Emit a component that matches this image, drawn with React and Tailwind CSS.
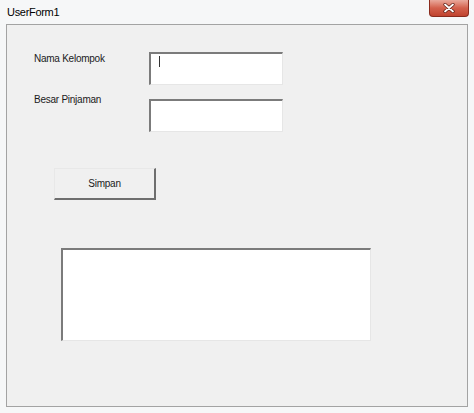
import React from "react";

function TextBox({ children }) {
  return (
    <div className="w-[134px] h-[33px] bg-white border-t-2 border-l-2 border-r border-b border-t-[#7b7b7b] border-l-[#7b7b7b] border-r-[#e6e6e6] border-b-[#e6e6e6]">
      {children}
    </div>
  );
}

export default function App() {
  return (
    <div className="w-[474px] h-[413px] bg-[#f6f7f8] flex flex-col font-['Liberation_Sans',Arial,sans-serif] text-[#1a1a1a] overflow-hidden">
      <div className="h-[24px] flex items-start justify-between shrink-0">
        <span className="ml-[7px] mt-[6px] text-[11px] leading-[13px] tracking-[-0.3px] text-black">UserForm1</span>
        <div className="mr-[5px] w-[40px] h-[17px] rounded-b-[4px] border border-t-0 border-[#8a2b1d] bg-gradient-to-b from-[#e9a99c] via-[#d3604c] to-[#c0432f] flex items-center justify-center">
          <svg width="12" height="10" viewBox="0 0 12 10">
            <path d="M2 1.5 L10 8.5 M10 1.5 L2 8.5" stroke="#5a1a10" strokeWidth="3.2" strokeLinecap="round" />
            <path d="M2 1.5 L10 8.5 M10 1.5 L2 8.5" stroke="#ffffff" strokeWidth="1.8" strokeLinecap="round" />
          </svg>
        </div>
      </div>
      <div className="ml-[6px] w-[462px] h-[383px] border border-[#a3a3a3] bg-[#f0f0f0] flex flex-col shrink-0">
        <div className="mt-[27px] flex items-start">
          <div className="ml-[27px] w-[115px] pt-[1px] flex flex-col gap-[29px] text-[10px] leading-[12px] tracking-[-0.25px]">
            <span>Nama Kelompok</span>
            <span>Besar Pinjaman</span>
          </div>
          <div className="flex flex-col gap-[14px]">
            <TextBox>
              <div className="ml-[8px] mt-[2px] w-[1px] h-[11px] bg-[#333]" />
            </TextBox>
            <TextBox />
          </div>
        </div>
        <div className="mt-[36px] ml-[47px] w-[102px] h-[32px] bg-[#f0f0f0] border-t border-l border-t-[#e8e8e8] border-l-[#e8e8e8] border-r-2 border-b-2 border-r-[#6e6e6e] border-b-[#6e6e6e] flex items-center justify-center text-[10px] tracking-[-0.25px]">
          Simpan
        </div>
        <div className="mt-[48px] ml-[54px] w-[310px] h-[93px] bg-white border-t-2 border-l-2 border-r border-b border-t-[#7b7b7b] border-l-[#7b7b7b] border-r-[#e6e6e6] border-b-[#e6e6e6]" />
      </div>
    </div>
  );
}
